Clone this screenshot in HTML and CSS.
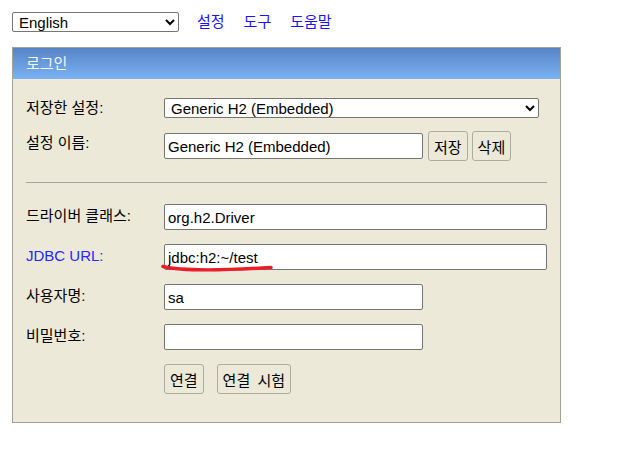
FILE: index.html
```html
<!DOCTYPE html>
<html lang="ko">

<head>
    <meta charset="UTF-8">
    <meta name="viewport" content="width=device-width, initial-scale=1.0">
    <title>H2 Console 로그인</title>
    <link rel="stylesheet" href="styles.css">
</head>

<body>
    <!--상단 메뉴-->
    <div class="topbar">
        <select class="lang">
            <option>English</option>
        </select>
        <a href="#" class="nav">설정</a>
        <a href="#" class="nav">도구</a>
        <a href="#" class="nav">도움말</a>
    </div>

    <!--로그인 박스-->
    <div class="login">
        <div class="login-title">로그인</div>
        <div class="login-body">
            <div class="row row-setting">
                <label class="label">저장한 설정:</label>
                <select class="setting">
                    <option>Generic H2 (Embedded)</option>
                </select>
            </div>
            <div class="row row-name">
                <label class="label">설정 이름:</label>
                <input class="field short" type="text" value="Generic H2 (Embedded)">
                <button class="btn">저장</button>
                <button class="btn">삭제</button>
            </div>

            <hr class="line">

            <div class="row">
                <label class="label">드라이버 클래스:</label>
                <input class="field wide" type="text" value="org.h2.Driver">
            </div>
            <div class="row">
                <a href="#" class="label label-link">JDBC URL:</a>
                <span class="mark-wrap">
                    <input class="field wide" type="text" value="jdbc:h2:~/test">
                    <!--빨간 밑줄 표시-->
                    <svg class="mark" width="114" height="12" viewBox="0 0 114 12">
                        <path d="M2 4.5 C 20 9, 62 8.5, 110 5.5" fill="none" stroke="#e61f2a" stroke-width="3.5" stroke-linecap="round" />
                    </svg>
                </span>
            </div>
            <div class="row">
                <label class="label">사용자명:</label>
                <input class="field short" type="text" value="sa">
            </div>
            <div class="row">
                <label class="label">비밀번호:</label>
                <input class="field short" type="password" value="">
            </div>
            <div class="row row-buttons">
                <span class="label"></span>
                <button class="btn">연결</button>
                <button class="btn btn-test">연결 시험</button>
            </div>
        </div>
    </div>
</body>

</html>
```

FILE: styles.css
```css
* {
    margin: 0;
    padding: 0;
    box-sizing: border-box;
}

body {
    margin: 12px;
    font-family: "Liberation Sans", "Noto Sans CJK KR", sans-serif;
    font-size: 15px;
    color: #000;
    background-color: #fff;
}

/*상단 메뉴*/
.topbar {
    display: flex;
    align-items: center;
    height: 20px;
}

.topbar .lang {
    width: 167px;
    height: 20px;
    margin-right: 18px;
}

.nav {
    margin-right: 19px;
    color: #1515ff;
    text-decoration: none;
    line-height: 20px;
}

select {
    font-family: inherit;
    font-size: 15px;
    border: 1px solid #767676;
    border-radius: 2px;
    background-color: #fff;
    color: #000;
    padding: 0 2px;
}

/*로그인 박스*/
.login {
    width: 549px;
    margin-top: 15px;
    border: 1px solid #a4a496;
    background-color: #ece9d8;
}

.login-title {
    height: 31px;
    padding-left: 13px;
    line-height: 31px;
    color: #f2f6ff;
    background: linear-gradient(to bottom, #5784c6, #7ab2f3);
}

.login-body {
    padding: 19px 13px 28px;
}

.row {
    display: flex;
    align-items: flex-start;
    margin-top: 14px;
}

.row-setting {
    margin-top: 0;
    height: 20px;
}

.row-name {
    margin-top: 13px;
    align-items: center;
    height: 30px;
}

.label {
    flex: 0 0 138px;
    line-height: 20px;
    padding-top: 2px;
    color: #000;
    text-decoration: none;
}

.row-setting .label {
    padding-top: 0;
}

.row-name .label {
    align-self: flex-start;
}

.label-link {
    color: #2626ff;
}

.setting {
    width: 375px;
    height: 20px;
}

.field {
    height: 26px;
    padding: 0 3px;
    font-family: inherit;
    font-size: 15px;
    border: 1px solid #767676;
    border-radius: 2px;
    background-color: #fff;
    color: #000;
}

.field.wide {
    width: 383px;
}

.field.short {
    width: 259px;
}

.mark-wrap {
    position: relative;
    display: block;
}

.mark {
    position: absolute;
    left: -3px;
    top: 18px;
}

.line {
    height: 0;
    margin: 21px 0;
    border: none;
    border-top: 1px solid #a3a3a3;
}

.btn {
    height: 30px;
    padding: 0 5px;
    font-family: inherit;
    font-size: 15px;
    color: #000;
    background-color: #ece9d8;
    border: 1px solid #aeaba0;
    border-radius: 3px;
}

.row-name .btn {
    margin-left: 4px;
}

.row-name .field + .btn {
    margin-left: 5px;
}

.row-buttons .btn-test {
    margin-left: 13px;
    word-spacing: 3px;
}
```
